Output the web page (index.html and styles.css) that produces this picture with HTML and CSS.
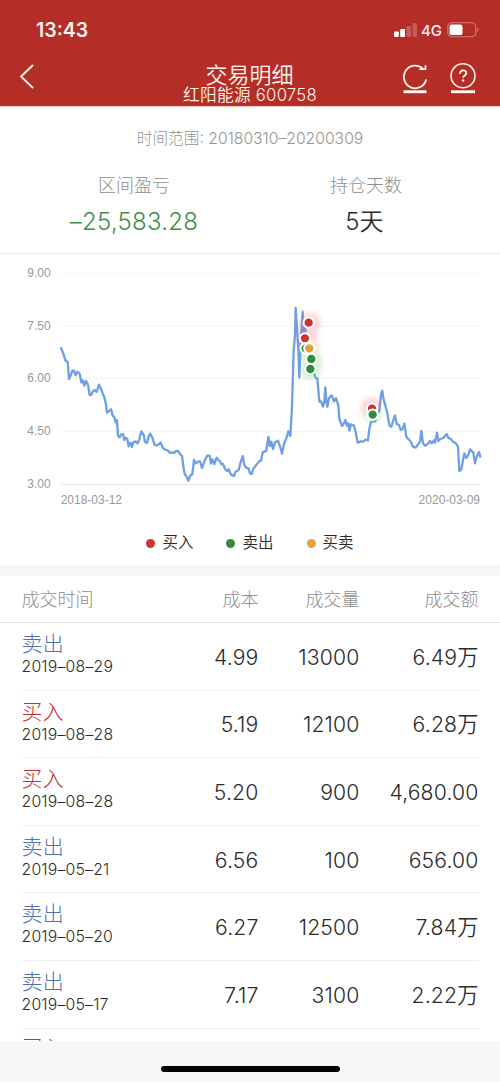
FILE: index.html
```html
<!DOCTYPE html>
<html lang="zh-CN">
<head>
<meta charset="utf-8">
<title>交易明细</title>
<link rel="stylesheet" href="styles.css">
</head>
<body>
<div class="screen">
  <header class="top">
    <div class="status">
      <span class="clock">13:43</span>
      <span class="status-right">
        <svg class="signal" width="24" height="16" viewBox="0 0 24 16"><rect x="0" y="9.500" width="4.800" height="5.500" rx="1" fill="#fff"/><rect x="6.200" y="7" width="4.800" height="8" rx="1" fill="#fff"/><rect x="12.300" y="4" width="4.800" height="11" rx="1" fill="#fff" opacity=".22"/><rect x="18.400" y="1" width="4.600" height="14" rx="1" fill="#fff" opacity=".22"/></svg>
        <span class="net">4G</span>
        <svg class="battery" width="33" height="16" viewBox="0 0 33 16"><rect x=".8" y=".8" width="28" height="14" rx="4" fill="none" stroke="#fff" stroke-opacity=".4" stroke-width="1.100"/><rect x="2.500" y="2.600" width="13" height="10.500" rx="2.200" fill="#fff"/><path d="M30.500 5.500q2 2.300 0 4.600z" fill="#fff" opacity=".5"/></svg>
      </span>
    </div>
    <div class="nav">
      <svg class="back" width="18" height="26" viewBox="0 0 18 26"><path d="M15 2 3 13.500 15 25" fill="none" stroke="#fff0e8" stroke-width="1.900"/></svg>
      <div class="titles"><h1>交易明细</h1><p>红阳能源 600758</p></div>
      <div class="actions">
        <svg width="28" height="34" viewBox="0 0 28 34"><g fill="none" stroke="#fff4e8" stroke-width="1.800"><path d="M22.200 7A11.300 11.300 0 1 0 25.200 17.500"/><path d="M18.300 7.200h6.200V3.300"/></g><path d="M2.500 28.300h23v2.900h-23z" fill="#fff8ec"/></svg>
        <svg width="28" height="34" viewBox="0 0 28 34"><circle cx="14" cy="13.800" r="12" fill="none" stroke="#fff4e8" stroke-width="1.600"/><path d="M10.900 11.800c.2-4.500 6.400-4.300 6.400-.7 0 2.600-3.200 2.200-3.200 4.600" fill="none" stroke="#fff4e8" stroke-width="1.800"/><circle cx="14.100" cy="18.500" r="1.200" fill="#fff4e8"/><path d="M2 28.300h24v2.900H2z" fill="#fff8ec"/></svg>
      </div>
    </div>
  </header>

  <section class="summary">
    <p class="range">时间范围: <span>20180310–20200309</span></p>
    <div class="stats">
      <div class="stat profit"><p>区间盈亏</p><strong>–25,583.28</strong></div>
      <div class="stat days"><p>持仓天数</p><strong>5天</strong></div>
    </div>
  </section>

  <section class="chart">
    <svg class="plot" width="500" height="260" viewBox="0 0 1500 780">
      <g stroke="#f3f3f3" stroke-width="3"><path d="M183 40H1441M183 199H1441M183 355H1441M183 514H1441"/><path d="M183 673H1441" stroke="#e6e6e6"/></g>
      <g class="axis"><text x="152" y="51" text-anchor="end">9.00</text><text x="152" y="209" text-anchor="end">7.50</text><text x="152" y="367" text-anchor="end">6.00</text><text x="152" y="526" text-anchor="end">4.50</text><text x="152" y="684" text-anchor="end">3.00</text><text x="182" y="731">2018-03-12</text><text x="1440" y="731" text-anchor="end">2020-03-09</text></g>
      <polyline fill="none" stroke="#70a0e4" stroke-width="7" stroke-linejoin="round" stroke-linecap="round" points="183,264 188,276 192,286 196,301 203,306 207,357 213,344 217,332 222,332 227,346 232,335 239,341 244,367 248,361 253,377 258,363 264,374 269,405 274,404 278,395 284,390 290,396 297,374 302,384 308,400 313,412 317,428 321,458 326,454 333,448 338,467 343,472 347,487 351,481 354,527 359,532 363,524 369,522 373,540 377,533 382,538 386,559 391,548 396,561 400,547 407,544 413,550 418,538 424,514 431,525 435,546 441,549 446,530 450,521 457,532 463,553 469,556 476,554 482,548 488,563 494,568 500,570 506,574 511,579 517,577 523,579 528,573 534,573 540,582 546,588 550,620 554,641 560,651 565,662 570,648 577,642 582,600 588,610 594,605 600,604 606,624 611,610 616,598 622,587 629,587 633,611 637,598 643,612 650,593 656,600 660,604 664,613 669,612 675,626 681,633 686,628 693,644 702,648 707,635 716,630 721,610 728,588 733,614 739,624 746,625 750,640 755,642 760,626 768,616 777,604 783,602 788,577 799,572 805,531 810,558 814,545 819,567 825,547 834,542 842,565 846,581 852,552 860,532 865,514 871,528 876,440 881,270 885,225 887,144 892,220 895,270 898,353 903,230 908,155 911,230 915,180 918,250 924,230 930,310 934,338 943,342 947,354 952,355 958,425 963,424 969,440 973,425 976,382 979,425 982,440 987,415 995,406 1002,425 1008,414 1015,436 1018,476 1026,498 1032,490 1036,480 1041,497 1045,490 1048,512 1053,493 1062,497 1067,517 1073,548 1082,544 1090,545 1097,539 1104,541 1108,507 1113,485 1125,484 1132,463 1138,452 1143,403 1147,392 1150,415 1157,440 1162,460 1168,496 1174,500 1180,480 1185,466 1190,491 1197,495 1202,510 1208,506 1213,491 1219,530 1227,539 1233,546 1238,559 1247,563 1255,552 1260,545 1264,513 1269,550 1275,557 1284,551 1290,543 1295,550 1302,541 1305,548 1311,518 1315,543 1321,537 1330,534 1340,522 1345,533 1353,538 1360,546 1368,550 1374,560 1378,633 1384,628 1389,600 1393,580 1399,594 1404,587 1410,568 1417,575 1420,577 1425,610 1430,590 1437,576 1441,590"/>
      <g class="halo"><circle cx="930" cy="190" r="32" fill="#f45a68"/><circle cx="922" cy="240" r="32" fill="#f45a68"/><circle cx="931" cy="268" r="30" fill="#efb359"/><circle cx="936" cy="306" r="32" fill="#61c461"/><circle cx="932" cy="330" r="30" fill="#61c461"/><circle cx="1114" cy="444" r="32" fill="#f45a68"/><circle cx="1120" cy="466" r="25" fill="#61c461"/></g>
      <g stroke="#fff" stroke-width="6"><circle cx="926" cy="188" r="15.500" fill="#c8342f"/><circle cx="915" cy="235" r="15.500" fill="#c8342f"/><circle cx="917" cy="265" r="15.500" fill="#318b38"/><circle cx="928" cy="265" r="15.500" fill="#e0a03c"/><circle cx="934" cy="297" r="15.500" fill="#318b38"/><circle cx="931" cy="327" r="15.500" fill="#318b38"/><circle cx="1116" cy="446" r="15.500" fill="#c8342f"/><circle cx="1118" cy="464" r="15.500" fill="#318b38"/></g>
    </svg>
    <div class="legend"><span><i class="dot buy"></i>买入</span><span><i class="dot sell"></i>卖出</span><span><i class="dot both"></i>买卖</span></div>
  </section>

  <section class="trades">
    <div class="grid head"><span>成交时间</span><span>成本</span><span>成交量</span><span>成交额</span></div>
    <div class="rows">
      <div class="grid row"><div class="when"><b class="out">卖出</b><time>2019–08–29</time></div><span>4.99</span><span>13000</span><span>6.49万</span></div>
      <div class="grid row"><div class="when"><b class="in">买入</b><time>2019–08–28</time></div><span>5.19</span><span>12100</span><span>6.28万</span></div>
      <div class="grid row"><div class="when"><b class="in">买入</b><time>2019–08–28</time></div><span>5.20</span><span>900</span><span>4,680.00</span></div>
      <div class="grid row"><div class="when"><b class="out">卖出</b><time>2019–05–21</time></div><span>6.56</span><span>100</span><span>656.00</span></div>
      <div class="grid row"><div class="when"><b class="out">卖出</b><time>2019–05–20</time></div><span>6.27</span><span>12500</span><span>7.84万</span></div>
      <div class="grid row"><div class="when"><b class="out">卖出</b><time>2019–05–17</time></div><span>7.17</span><span>3100</span><span>2.22万</span></div>
      <div class="grid row"><div class="when"><b class="in">买入</b></div></div>
    </div>
  </section>
  <footer class="home"><div class="bar"></div></footer>
</div>
</body>
</html>
```
FILE: styles.css
```css
* { box-sizing: border-box; }
body, h1, p { margin: 0; }
body { font-family: Inter, "Noto Sans CJK SC", sans-serif; font-weight: 350; color: #2b2b2b; background: #fff; }
.screen { width: 500px; height: 1082px; overflow: hidden; display: flex; flex-direction: column; }
svg { display: block; }

.top { height: 106px; flex: none; background: #b42d26; color: #fff3ee; }
.status { height: 60px; display: flex; justify-content: space-between; padding: 20px 20px 0 36px; }
.clock { font-size: 19.5px; line-height: 20px; font-weight: 600; }
.status-right { display: flex; height: 20px; align-items: center; }
.signal { margin-right: 3px; }
.net { font-size: 15px; font-weight: 500; width: 26px; }
.nav { height: 46px; display: grid; grid-template-columns: 120px 1fr 120px; }
.back { margin: 3px 0 0 18px; }
.titles { text-align: center; }
.titles h1 { font-size: 22px; line-height: 22px; font-weight: 350; padding-top: 4px; margin-left: -1px; }
.titles p { font-size: 16.7px; line-height: 16px; margin-top: 1px; letter-spacing: .25px; white-space: nowrap; }
.actions { display: flex; gap: 20px; padding: 2px 0 0 21px; }

.summary { height: 148px; flex: none; border-top: 1px solid #f7cfc4; border-bottom: 1px solid #ececec; }
.range { color: #949494; font-weight: 300; text-align: center; font-size: 15.7px; line-height: 20px; padding-top: 22px; }
.stats { display: flex; padding: 24px 18px 0; }
.stat { width: 232px; text-align: center; }
.stat p { color: #8e8e8e; font-weight: 300; font-size: 18px; line-height: 24px; padding-top: 1px; }
.stat strong { display: block; font-size: 24px; line-height: 30px; font-weight: 350; margin-top: 9px; letter-spacing: .25px; }
.days strong { margin-left: -3px; }
.profit strong { color: #3c8f4b; }

.chart { height: 311px; flex: none; padding-top: 6px; }
.axis text { font: 36px "Liberation Sans", sans-serif; fill: #999; }
.halo { opacity: .25; filter: blur(8px); }
.legend { display: flex; justify-content: center; gap: 33px; font-size: 15.5px; line-height: 22px; margin-top: 12px; }
.legend span { display: flex; align-items: center; gap: 7px; }
.dot { width: 9px; height: 9px; border-radius: 50%; }
.buy { background: #cd3630; }
.sell { background: #318b38; }
.both { background: #e6a23c; }

.trades { height: 476px; flex: none; overflow: hidden; border-top: 11px solid #f7f7f8; }
.grid { display: grid; grid-template-columns: 126px 111px 101px 119px; align-items: center; }
.grid > span { text-align: right; line-height: 26px; }
.head { height: 47px; padding: 1px 21.5px 0; border-bottom: 1px solid #e8e8e8; color: #8e8e8e; font-weight: 300; font-size: 18px; }
.grid.head > span:first-child { text-align: left; }
.rows { padding: 0 21.5px; }
.row { height: 67.6px; border-bottom: 1px solid #ededed; font-size: 21.2px; letter-spacing: .15px; white-space: nowrap; }
.row > span { padding-top: 1px; }
.when { align-self: start; padding-top: 8px; }
.row:last-child .when { padding-top: 6px; }
.when b { display: block; font-size: 21px; line-height: 26px; font-weight: 300; }
.when time { display: block; font-size: 15.8px; line-height: 20px; letter-spacing: .2px; }
.out { color: #4f73b0; }
.in { color: #c22f32; }

.home { flex: 1; background: #f7f7f7; padding-top: 25px; }
.bar { width: 179px; height: 6px; margin: 0 auto; border-radius: 3px; background: #000; }
```
